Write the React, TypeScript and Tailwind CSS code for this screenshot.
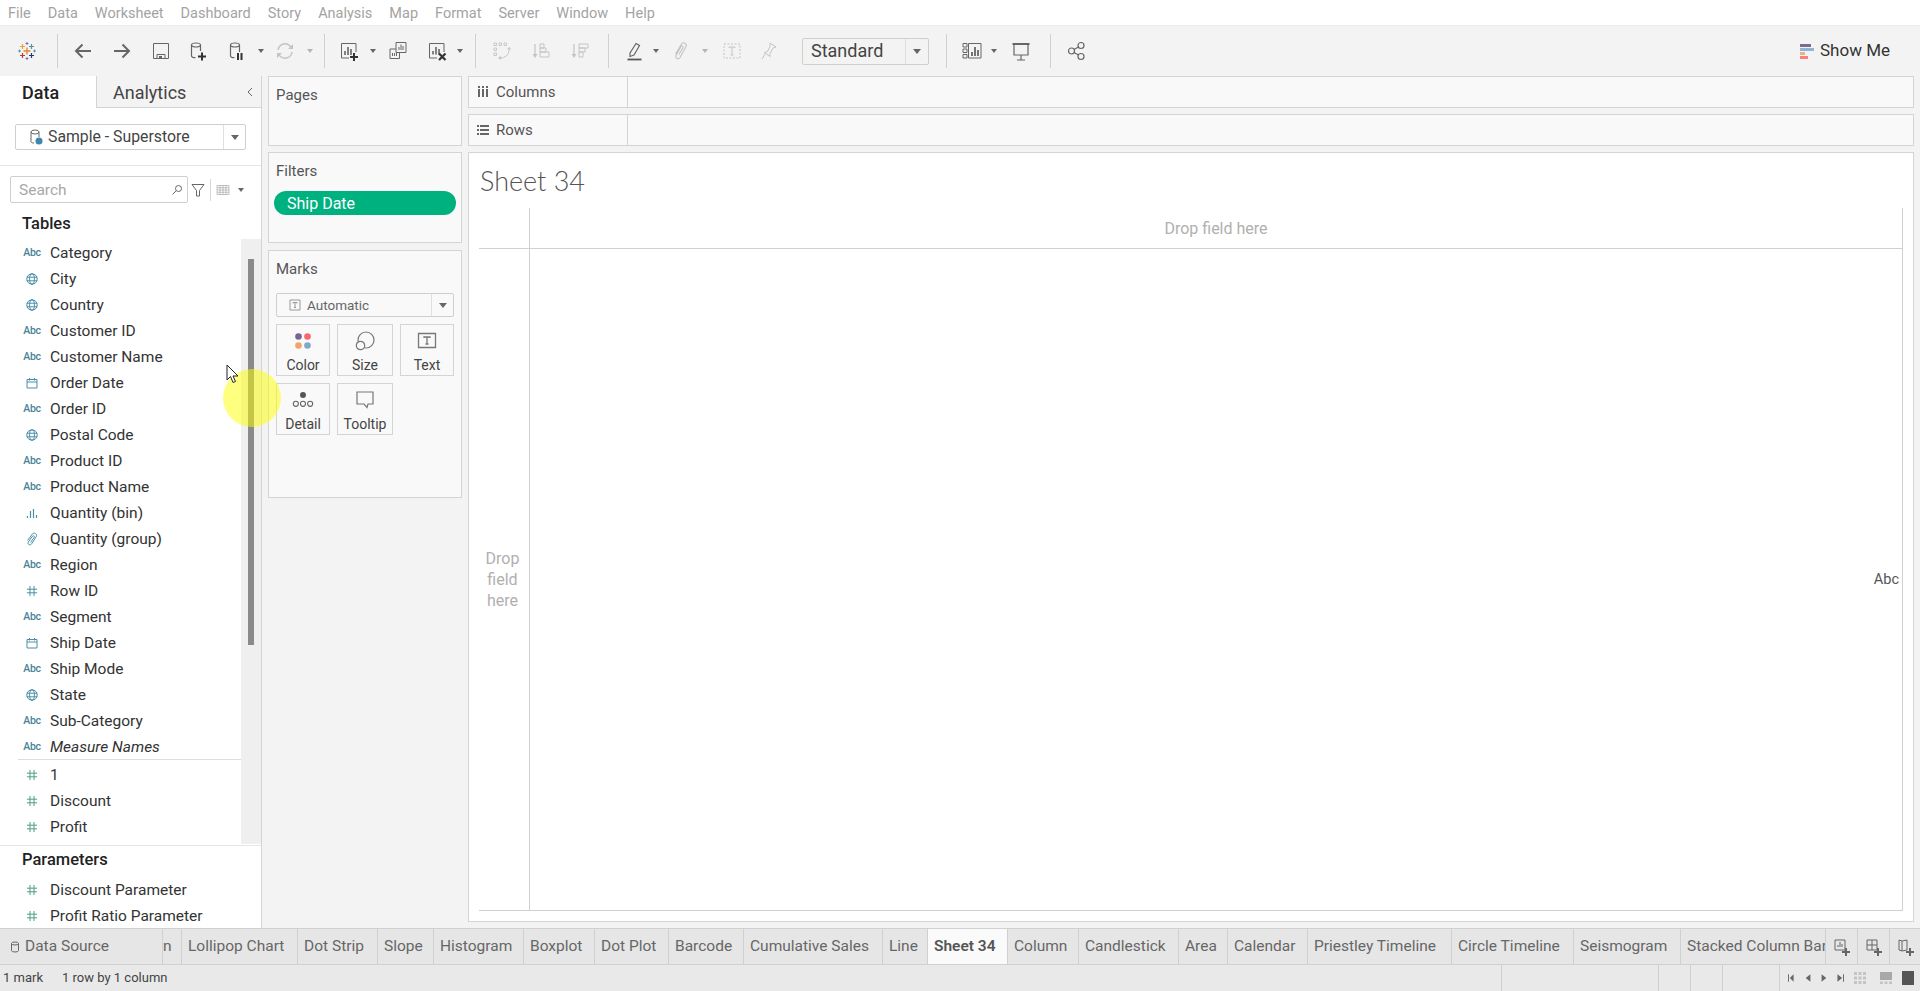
import type { ReactNode } from 'react';

const menuItems = ['File', 'Data', 'Worksheet', 'Dashboard', 'Story', 'Analysis', 'Map', 'Format', 'Server', 'Window', 'Help'];

function Ico({ children, className = '' }: { children: ReactNode; className?: string }) {
  return (
    <svg viewBox="0 0 20 20" className={`w-[20px] h-[20px] shrink-0 ${className}`} fill="none" stroke="currentColor" strokeWidth="1.2">
      {children}
    </svg>
  );
}

// small toolbar caret, keeps an 8px box so the spacing below stays simple
function Caret({ className = '', dim = false }: { className?: string; dim?: boolean }) {
  return (
    <div className={`w-[8px] flex justify-center shrink-0 ${className}`}>
      <svg viewBox="0 0 6 4" className={`w-[6px] h-[4px] ${dim ? 'text-[#b5b5b5]' : 'text-[#666666]'}`}>
        <path d="M0 0h6L3 4z" fill="currentColor" />
      </svg>
    </div>
  );
}

function DropCaret() {
  return (
    <svg viewBox="0 0 8 5" className="w-[8px] h-[5px] text-[#666666]">
      <path d="M0 0h8L4 5z" fill="currentColor" />
    </svg>
  );
}

function Sep({ className = '' }: { className?: string }) {
  return <div className={`w-px h-[34px] bg-[#d0d0d0] shrink-0 ${className}`} />;
}

function TableauLogo() {
  const cross = (x: number, y: number, s: number, c: string, w = 1.2) => (
    <path key={`${x}-${y}`} d={`M${x - s} ${y}H${x + s}M${x} ${y - s}V${y + s}`} stroke={c} strokeWidth={w} />
  );
  return (
    <svg viewBox="0 0 18 18" className="w-[18px] h-[18px] shrink-0 ml-[18px]" fill="none">
      {cross(9, 9, 3.5, '#e8862e', 1.4)}
      {cross(4.5, 4.5, 2.5, '#e8a33c')}
      {cross(13.5, 4.5, 2.5, '#5b8fa8')}
      {cross(4.5, 13.5, 2.5, '#c0392b')}
      {cross(13.5, 13.5, 2.5, '#1f3a73')}
      {cross(9, 1.5, 1.4, '#7a6aa8', 1)}
      {cross(9, 16.5, 1.4, '#7a6aa8', 1)}
      {cross(1.5, 9, 1.4, '#5b8fa8', 1)}
      {cross(16.5, 9, 1.4, '#5b8fa8', 1)}
    </svg>
  );
}

function Toolbar() {
  return (
    <div className="h-[51px] bg-[#f3f3f3] flex items-center text-[#666666] border-t border-[#ececec]">
      <TableauLogo />
      <Sep className="ml-[21px]" />
      <Ico className="ml-[15px]"><path d="M18 10H3M9.500 3.500L3 10l6.500 6.500" strokeWidth="2" /></Ico>
      <Ico className="ml-[19px]"><path d="M2 10h15M10.500 3.500L17 10l-6.500 6.500" strokeWidth="2" /></Ico>
      <Ico className="ml-[19px]"><path d="M2.500 2.500h15v15h-15zM6 17.500v-4h8v4" strokeWidth="1" /><path d="M8 15h3v2.500H8z" fill="currentColor" stroke="none" /></Ico>
      <Ico className="ml-[17px]">
        <ellipse cx="8" cy="4" rx="4.500" ry="2" />
        <path d="M3.500 4v11a3 2 0 0 0 4 1.500M12.500 4v6" />
        <path d="M10 15.500h8M14 11.500v8" strokeWidth="2" stroke="#333333" />
      </Ico>
      <Ico className="ml-[19px]">
        <ellipse cx="8" cy="4" rx="4.500" ry="2" />
        <path d="M3.500 4v11a3 2 0 0 0 4 1.500M12.500 4v7" />
        <path d="M11 12v7M14.500 12v7" strokeWidth="2" stroke="#333333" />
      </Ico>
      <Caret className="ml-[10px]" />
      <Ico className="ml-[10px] text-[#c4c4c4]">
        <path d="M3 9a7 7 0 0 1 12-4l2 2M17 11a7 7 0 0 1-12 4l-2-2" strokeWidth="1.500" />
        <path d="M18 3v5h-5zM2 17v-5h5z" fill="currentColor" stroke="none" />
      </Ico>
      <Caret dim className="ml-[11px]" />
      <Sep className="ml-[10px]" />
      <Ico className="ml-[14px]">
        <path d="M17 11V2.500H2.500V17H10" strokeWidth="1" />
        <path d="M6 14v-4M9 14V6M12 14V8" strokeWidth="1.600" />
        <path d="M11 16h8M15 12v8" strokeWidth="2" stroke="#333333" />
      </Ico>
      <Caret className="ml-[10px]" />
      <Ico className="ml-[11px]">
        <path d="M8 1.500h10v10H8zM2 8h6M2 8v9.500h9.500v-6" strokeWidth="1" />
        <path d="M11 9V6M13 9V3.500M15 9V5M4.500 15v-3M6.500 15v-3M8.500 15v-3" strokeWidth="1" />
      </Ico>
      <Ico className="ml-[19px]">
        <path d="M2.500 2.500H17V11M2.500 2.500V17H10" strokeWidth="1" />
        <path d="M6 13.500V10M9 13.500V6M12 13.500V8" strokeWidth="1.600" />
        <path d="M12 12.500l6.500 6.500M18.500 12.500L12 19" strokeWidth="2.200" stroke="#333333" />
      </Ico>
      <Caret className="ml-[9px]" />
      <Sep className="ml-[11px]" />
      <Ico className="ml-[16px] text-[#c4c4c4]">
        <path d="M2 2h2.500v2.500H2zM7 2h2.500v2.500H7zM12 2h2.500v2.500H12zM2 7h2.500v2.500H2zM2 12h2.500v2.500H2zM8 17a8 8 0 0 0 9-8" strokeWidth="0.900" />
        <path d="M15 8l2.500-2 1.500 3zM9 15v4l-3-2z" fill="currentColor" stroke="none" />
      </Ico>
      <Ico className="ml-[19px] text-[#c4c4c4]">
        <path d="M4 3v12" /><path d="M1.500 13h5L4 17z" fill="currentColor" stroke="none" />
        <path d="M9 3h4v4H9zM9 7h6v4H9zM9 11h9v5H9z" strokeWidth="1" />
      </Ico>
      <Ico className="ml-[19px] text-[#c4c4c4]">
        <path d="M4 3v12" /><path d="M1.500 13h5L4 17z" fill="currentColor" stroke="none" />
        <path d="M9 3h9v4H9zM9 7h6v4H9zM9 11h4v5H9z" strokeWidth="1" />
      </Ico>
      <Sep className="ml-[18px]" />
      <Ico className="ml-[16px]">
        <path d="M5 12L11 2.500l3.500 2L9 14l-4 1.500z" />
        <path d="M2.500 18.500h14" strokeWidth="1.800" stroke="#555555" />
      </Ico>
      <Caret className="ml-[7px]" />
      <Ico className="ml-[11px] text-[#c4c4c4]">
        <path d="M4.500 13L10.500 3c1.800-2.500 6-.5 4.500 2.500L9 16.500c-1.300 2.200-5 1-4-2L10 5.500c.8-1.300 2.500-.5 2 1L8 13.500" strokeWidth="1.100" />
      </Ico>
      <Caret dim className="ml-[10px]" />
      <Ico className="ml-[13px] text-[#c4c4c4]">
        <path d="M2 3h16v14H2z" strokeDasharray="2 1.500" strokeWidth="1" />
        <path d="M7 7V6h6v1M10 6v8M8.500 14h3" strokeWidth="1" />
      </Ico>
      <Ico className="ml-[17px] text-[#c4c4c4]">
        <path d="M11 2l6 4-3 1-3 5.500 0 3-5.500-4 3-1L11 5.500zM6.500 12L3 18" strokeWidth="1" />
      </Ico>
      <div className="ml-[23px] w-[127px] h-[27px] flex items-center border border-[#cfcfcf] rounded-[2px] shrink-0">
        <span className="pl-[8px] flex-1 text-[#444444] text-[18px] leading-[22px] pb-[1px]">Standard</span>
        <div className="w-[23px] h-full flex items-center justify-center border-l border-[#e0e0e0]"><DropCaret /></div>
      </div>
      <Sep className="ml-[17px]" />
      <Ico className="ml-[15px]">
        <path d="M1 2.500h4v3.500H1zM1 8h4v3.500H1zM1 13.500h4V17H1zM6.500 2.500H19V17H6.500z" strokeWidth="1" />
        <path d="M10 15V11M13 15V6M16 15V9" strokeWidth="1.800" />
      </Ico>
      <Caret className="ml-[8px]" />
      <Ico className="ml-[13px]">
        <path d="M1.500 3h17" strokeWidth="2" />
        <path d="M3 3v11h14V3M10 14v5M6 19h8" />
      </Ico>
      <Sep className="ml-[19px]" />
      <Ico className="ml-[16px]">
        <circle cx="14" cy="4.500" r="3" /><circle cx="4.500" cy="10" r="3" /><circle cx="14" cy="15.500" r="3" />
        <path d="M7 8.500l4.500-2.500M7 11.500l4.500 2.500" />
      </Ico>
      <div className="ml-auto mr-[30px] flex items-center gap-[6px]">
        <div className="flex flex-col w-[14px] gap-[1px]">
          <div className="h-[3px] w-[11px] bg-[#7b6b93]" />
          <div className="h-[3px] w-[14px] bg-[#8fb4d6]" />
          <div className="h-[3px] w-[5px] bg-[#f2b27a]" />
          <div className="h-[3px] w-[8px] bg-[#f58283]" />
        </div>
        <span className="text-[17px] text-[#333333]">Show Me</span>
      </div>
    </div>
  );
}

type FieldKind = 'abc' | 'globe' | 'date' | 'bin' | 'clip' | 'hash';

function AbcIcon() {
  return <span className="text-[10.500px] font-medium text-[#4a8299] w-[20px] text-center tracking-[-0.2px]">Abc</span>;
}

function FieldIcon({ kind, color = 'text-[#4a8fa8]' }: { kind: FieldKind; color?: string }) {
  if (kind === 'abc') return <AbcIcon />;
  return (
    <svg viewBox="0 0 14 14" className={`w-[14px] h-[14px] mx-[3px] ${color}`} fill="none" stroke="currentColor" strokeWidth="1">
      {kind === 'globe' && (
        <>
          <circle cx="7" cy="7" r="5.200" />
          <ellipse cx="7" cy="7" rx="2.400" ry="5.200" />
          <path d="M1.800 5.200h10.400M1.800 8.800h10.400" />
        </>
      )}
      {kind === 'date' && <path d="M2 3.500h10v8.500H2zM2 6h10M4.500 2v2.500M9.500 2v2.500" />}
      {kind === 'bin' && <path d="M2.500 12V10M5.500 12V5M8.500 12V3M11.500 12V9" strokeWidth="1.200" />}
      {kind === 'clip' && <path d="M2.500 8.500L7.500 1.800c1.800-1.800 5 .2 3.800 2.700L6.500 12c-1.200 1.800-4.300.6-3.300-1.800L7.500 4.200c.8-1 2.300-.2 1.800 1L5.500 10.500" strokeWidth="1" />}
      {kind === 'hash' && <path d="M5 2v10M9 2v10M2 5.200h10M2 8.800h10" />}
    </svg>
  );
}

const dims: [string, FieldKind][] = [
  ['Category', 'abc'],
  ['City', 'globe'],
  ['Country', 'globe'],
  ['Customer ID', 'abc'],
  ['Customer Name', 'abc'],
  ['Order Date', 'date'],
  ['Order ID', 'abc'],
  ['Postal Code', 'globe'],
  ['Product ID', 'abc'],
  ['Product Name', 'abc'],
  ['Quantity (bin)', 'bin'],
  ['Quantity (group)', 'clip'],
  ['Region', 'abc'],
  ['Row ID', 'hash'],
  ['Segment', 'abc'],
  ['Ship Date', 'date'],
  ['Ship Mode', 'abc'],
  ['State', 'globe'],
  ['Sub-Category', 'abc'],
];

function Field({ label, kind, italic, green }: { label: string; kind: FieldKind; italic?: boolean; green?: boolean }) {
  return (
    <div className="h-[26px] flex items-center pl-[22px] shrink-0">
      <FieldIcon kind={kind} color={green ? 'text-[#4f9e82]' : undefined} />
      <span className={`ml-[8px] pt-[1px] text-[15.500px] text-[#333333] ${italic ? 'italic' : ''}`}>{label}</span>
    </div>
  );
}

function DataPane() {
  return (
    <div className="w-[262px] shrink-0 bg-white border-r border-[#d4d4d4] flex flex-col overflow-hidden">
      <div className="h-[32px] flex shrink-0">
        <div className="w-[97px] flex items-center pl-[22px] pt-[1px] font-medium text-[18px] text-[#222222] border-r border-[#d4d4d4]">Data</div>
        <div className="flex-1 flex items-center justify-between pl-[16px] pr-[8px] pt-[1px] bg-[#f3f3f3] border-b border-[#d4d4d4] text-[18px] text-[#444444]">
          Analytics
          <svg viewBox="0 0 6 10" className="w-[6px] h-[10px] text-[#666666]" fill="none" stroke="currentColor"><path d="M5 1L1 5l4 4" /></svg>
        </div>
      </div>
      <div className="h-[58px] shrink-0 border-b border-[#e6e6e6] pt-[16px] pl-[15px]">
        <div className="w-[231px] h-[26px] flex items-center border border-[#cfcfcf] rounded-[2px]">
          <svg viewBox="0 0 14 16" className="w-[14px] h-[16px] ml-[13px] text-[#666666]" fill="none" stroke="currentColor">
            <ellipse cx="6" cy="3" rx="4" ry="2" />
            <path d="M2 3v9a3 1.500 0 0 0 3 2M10 3v5" />
            <circle cx="10" cy="12" r="3.500" fill="#3f86ad" stroke="none" />
          </svg>
          <span className="ml-[5px] flex-1 text-[15.800px] text-[#444444]">Sample - Superstore</span>
          <div className="w-[22px] h-full flex items-center justify-center border-l border-[#e0e0e0]"><DropCaret /></div>
        </div>
      </div>
      <div className="h-[27px] mt-[10px] flex items-center pl-[10px] shrink-0">
        <div className="w-[178px] h-full flex items-center justify-between border border-[#cfcfcf] rounded-[2px] pl-[8px] pr-[4px]">
          <span className="text-[15.500px] text-[#a8a8a8] pt-[2px]">Search</span>
          <svg viewBox="0 0 12 12" className="w-[12px] h-[12px] text-[#666666]" fill="none" stroke="currentColor"><circle cx="7.500" cy="4.500" r="3" /><path d="M5 7l-3.500 3.500" /></svg>
        </div>
        <svg viewBox="0 0 14 14" className="w-[14px] h-[14px] ml-[3px] text-[#666666]" fill="none" stroke="currentColor"><path d="M1 1.500h12L8.500 7.500v5.500h-3V7.500z" /></svg>
        <div className="w-px h-[22px] bg-[#d8d8d8] ml-[5px]" />
        <svg viewBox="0 0 14 10" className="w-[14px] h-[10px] ml-[5px] text-[#888888]" fill="none" stroke="currentColor" strokeWidth="0.500"><path d="M1 .5h12v9H1zM1 2.750h12M1 5h12M1 7.250h12M4 .5v9M7 .5v9M10 .5v9" /></svg>
        <Caret className="ml-[7px]" />
      </div>
      <div className="h-[24px] mt-[9px] ml-[22px] font-medium text-[16.500px] text-[#222222] leading-[24px] shrink-0">Tables</div>
      <div className="h-[604px] mt-[4px] flex shrink-0">
        <div className="w-[241px] flex flex-col overflow-hidden">
          {dims.map(([label, kind]) => (
            <Field key={label} label={label} kind={kind} />
          ))}
          <Field label="Measure Names" kind="abc" italic />
          <div className="h-px bg-[#dddddd] ml-[18px] shrink-0 mt-[-1px]" />
          <div className="h-[2px] shrink-0" />
          <Field label="1" kind="hash" green />
          <Field label="Discount" kind="hash" green />
          <Field label="Profit" kind="hash" green />
        </div>
        <div className="w-[20px] bg-[#efefef] pl-[7px] pt-[20px] -mt-[1px]">
          <div className="w-[6px] h-[386px] bg-[#8a8a8a]" />
        </div>
      </div>
      <div className="border-t border-[#e6e6e6] mt-[1px] shrink-0">
        <div className="h-[31px] ml-[22px] pb-[2px] flex items-center font-medium text-[16.500px] text-[#222222]">Parameters</div>
        <Field label="Discount Parameter" kind="hash" green />
        <Field label="Profit Ratio Parameter" kind="hash" green />
      </div>
    </div>
  );
}

function MarkButton({ label, children, className }: { label: string; children: ReactNode; className: string }) {
  return (
    <div className={`h-[52px] border border-[#d4d4d4] flex flex-col items-center pt-[3px] ${className}`}>
      <div className="h-[26px] mb-[2px] flex items-center justify-center">{children}</div>
      <span className="text-[14px] leading-[18px] text-[#444444]">{label}</span>
    </div>
  );
}

function MarksCard() {
  return (
    <div className="h-[248px] bg-[#f9f9f9] border border-[#d4d4d4] pl-[7px] shrink-0">
      <div className="h-[37px] flex items-center text-[15px] text-[#555555]">Marks</div>
      <div className="mt-[5px] w-[178px] h-[24px] flex items-center border border-[#cfcfcf] rounded-[2px]">
        <svg viewBox="0 0 12 12" className="w-[12px] h-[12px] ml-[12px] text-[#999999]" fill="none" stroke="currentColor"><path d="M1 1h10v10H1zM4 4.500V3.500h4v1M6 3.500v5M5 8.500h2" /></svg>
        <span className="ml-[6px] flex-1 text-[13.500px] text-[#666666]">Automatic</span>
        <div className="w-[22px] h-full flex items-center justify-center border-l border-[#e0e0e0]"><DropCaret /></div>
      </div>
      <div className="mt-[7px] flex w-[178px]">
        <MarkButton label="Color" className="w-[54px]">
          <svg viewBox="0 0 18 18" className="w-[18px] h-[18px]">
            <circle cx="4.500" cy="4.500" r="3.300" fill="#7b6391" /><circle cx="13.500" cy="4.500" r="3.300" fill="#f5686c" />
            <circle cx="4.500" cy="13.500" r="3.300" fill="#f0a56b" /><circle cx="13.500" cy="13.500" r="3.300" fill="#7fa8d0" />
          </svg>
        </MarkButton>
        <MarkButton label="Size" className="w-[56px] ml-[7px]">
          <svg viewBox="0 0 20 20" className="w-[20px] h-[20px] text-[#777777]" fill="none" stroke="currentColor" strokeWidth="1.200"><circle cx="11" cy="9" r="8" /><circle cx="5.500" cy="14.500" r="4.200" fill="#f9f9f9" /></svg>
        </MarkButton>
        <MarkButton label="Text" className="w-[54px] ml-[7px]">
          <svg viewBox="0 0 20 20" className="w-[20px] h-[20px] text-[#777777]" fill="none" stroke="currentColor" strokeWidth="1.300"><path d="M1.500 2.500h17v14h-17zM7 7V6h6v1M10 6v7M8.500 13h3" /></svg>
        </MarkButton>
      </div>
      <div className="mt-[7px] flex w-[178px]">
        <MarkButton label="Detail" className="w-[54px]">
          <svg viewBox="0 0 20 16" className="w-[22px] h-[18px] text-[#666666]" fill="none" stroke="currentColor">
            <circle cx="10" cy="3.500" r="2.700" fill="#555555" stroke="none" />
            <circle cx="3.500" cy="11.500" r="2.300" /><circle cx="10" cy="11.500" r="2.300" /><circle cx="16.500" cy="11.500" r="2.300" />
          </svg>
        </MarkButton>
        <MarkButton label="Tooltip" className="w-[56px] ml-[7px]">
          <svg viewBox="0 0 20 20" className="w-[20px] h-[20px] text-[#777777]" fill="none" stroke="currentColor" strokeWidth="1.200"><path d="M2 2h16v12h-5l-1 3.500L9 14H2z" /></svg>
        </MarkButton>
      </div>
    </div>
  );
}

function Shelf({ label, children }: { label: string; children: ReactNode }) {
  return (
    <div className="h-[32px] bg-[#f9f9f9] border border-[#d4d4d4] flex shrink-0">
      <div className="w-[159px] border-r border-[#d4d4d4] flex items-center pl-[8px] gap-[7px] text-[15px] text-[#555555]">
        {children}
        {label}
      </div>
    </div>
  );
}

const tabs = [
  ['Lollipop Chart', 'w-[116px]'],
  ['Dot Strip', 'w-[80px]'],
  ['Slope', 'w-[56px]'],
  ['Histogram', 'w-[90px]'],
  ['Boxplot', 'w-[71px]'],
  ['Dot Plot', 'w-[74px]'],
  ['Barcode', 'w-[75px]'],
  ['Cumulative Sales', 'w-[139px]'],
  ['Line', 'w-[45px]'],
  ['Sheet 34', 'w-[80px]'],
  ['Column', 'w-[71px]'],
  ['Candlestick', 'w-[100px]'],
  ['Area', 'w-[49px]'],
  ['Calendar', 'w-[80px]'],
  ['Priestley Timeline', 'w-[144px]'],
  ['Circle Timeline', 'w-[122px]'],
  ['Seismogram', 'w-[107px]'],
];

function TabBar() {
  return (
    <div className="h-[37px] shrink-0 bg-[#e6e6e6] border-y border-[#d0d0d0] flex text-[15.500px] text-[#666666]">
      <div className="w-[163px] shrink-0 flex items-center pl-[10px] gap-[5px] border-r border-[#d0d0d0]">
        <svg viewBox="0 0 10 12" className="w-[10px] h-[12px]" fill="none" stroke="currentColor"><ellipse cx="5" cy="2.500" rx="3.500" ry="1.500" /><path d="M1.500 2.500v7a3.500 1.500 0 0 0 7 0v-7" /></svg>
        Data Source
      </div>
      <div className="w-[19px] shrink-0 border-r border-[#d0d0d0] flex items-center overflow-hidden">n</div>
      {tabs.map(([label, w]) => (
        <div
          key={label}
          className={`${w} shrink-0 flex items-center pl-[6px] whitespace-nowrap border-r border-[#d0d0d0] ${label === 'Sheet 34' ? 'bg-[#fafafa] font-semibold text-[#555555]' : ''}`}
        >
          {label}
        </div>
      ))}
      <div className="w-[144px] shrink-0 flex items-center pl-[6px] whitespace-nowrap overflow-hidden">Stacked Column Bar Chart</div>
      <div className="w-[32px] shrink-0 flex items-center justify-center border-l border-[#d0d0d0]">
        <svg viewBox="0 0 18 18" className="w-[18px] h-[18px]" fill="none" stroke="#666666"><path d="M2 2h10v10H2zM5 9V7M7 9V4M9 9V6" /><path d="M9 14h8M13 10v8" strokeWidth="2" /></svg>
      </div>
      <div className="w-[32px] shrink-0 flex items-center justify-center border-l border-[#d0d0d0]">
        <svg viewBox="0 0 18 18" className="w-[18px] h-[18px]" fill="none" stroke="#666666"><path d="M2 2h10v10H2zM2 7h10M7 2v10" /><path d="M9 14h8M13 10v8" strokeWidth="2" /></svg>
      </div>
      <div className="w-[32px] shrink-0 flex items-center justify-center border-l border-[#d0d0d0]">
        <svg viewBox="0 0 18 18" className="w-[18px] h-[18px]" fill="none" stroke="#666666"><path d="M2 2l3 1 5-1v10l-5 1-3-1zM5 3v10" /><path d="M9 14h8M13 10v8" strokeWidth="2" /></svg>
      </div>
    </div>
  );
}

function StatusBar() {
  return (
    <div className="h-[26px] shrink-0 bg-[#e9e9e9] flex items-center text-[13px] text-[#444444]">
      <span className="ml-[3px] w-[59px]">1 mark</span>
      <span className="w-[1439px]">1 row by 1 column</span>
      <div className="w-[157px] h-full border-l border-[#d0d0d0]" />
      <div className="w-[32px] h-full border-l border-[#d0d0d0]" />
      <div className="w-[32px] h-full border-l border-[#d0d0d0]" />
      <div className="w-[57px] h-full border-l border-[#d0d0d0]" />
      <div className="h-full border-l border-[#d0d0d0] flex items-center pl-[8px] flex-1 text-[#666666]">
        <svg viewBox="0 0 60 8" className="w-[56px] h-[8px]" fill="currentColor">
          <path d="M0 0h1v8H0zM6 0v8L2 4zM24 0v8l-5-4zM36 0l5 4-5 4zM53 0l5 4-5 4zM59 0h1v8h-1z" />
        </svg>
        <svg viewBox="0 0 60 14" className="w-[60px] h-[14px] ml-[10px]">
          <path d="M0 1h3v3H0zM4.500 1h3v3h-3zM9 1h3v3H9zM0 5.500h3v3H0zM4.500 5.500h3v3h-3zM9 5.500h3v3H9zM0 10h3v3H0zM4.500 10h3v3h-3zM9 10h3v3H9z" fill="#c4c4c4" />
          <path d="M26 1h12v8H26z" fill="#a8a8a8" />
          <path d="M26 10.500h3v2.500h-3zM30.500 10.500h3v2.500h-3zM35 10.500h3v2.500h-3z" fill="#c4c4c4" />
          <path d="M48 0h12v14H48z" fill="#555555" />
        </svg>
      </div>
    </div>
  );
}

function Canvas() {
  return (
    <div className="flex-1 bg-white border border-[#d4d4d4] flex flex-col min-h-0">
      <div className="h-[55px] pl-[11px] pt-[10px] text-[27px] leading-[36px] font-light text-[#555555] shrink-0" style={{ fontFamily: 'Lato, sans-serif' }}>Sheet 34</div>
      <div className="flex-1 ml-[10px] mr-[10px] mb-[10px] border-r border-b border-[#d0d0d0] grid grid-cols-[51px_1fr] grid-rows-[41px_1fr] text-[16px] text-[#b0b0b0]">
        <div className="border-r border-b border-[#d0d0d0]" />
        <div className="border-b border-[#d0d0d0] pt-[2px] flex items-center justify-center">Drop field here</div>
        <div className="border-r border-[#d0d0d0] flex items-center justify-center text-center leading-[21px] pr-[3px]">Drop<br />field<br />here</div>
        <div className="flex items-center justify-end pr-[3px] pt-[1px] text-[#555555] text-[14.500px]">Abc</div>
      </div>
    </div>
  );
}

export default function App() {
  return (
    <div className="relative w-[1920px] h-[991px] flex flex-col overflow-hidden bg-[#f3f3f3]" style={{ fontFamily: 'Roboto, sans-serif' }}>
      <div className="h-[25px] bg-white flex items-center gap-[17px] pl-[8px] pt-[3px] text-[14.500px] text-[#a3a3a3] shrink-0">
        {menuItems.map((label) => (
          <span key={label}>{label}</span>
        ))}
      </div>
      <Toolbar />
      <div className="flex flex-1 min-h-0">
        <DataPane />
        <div className="w-[194px] ml-[6px] shrink-0 flex flex-col">
          <div className="h-[70px] bg-[#f9f9f9] border border-[#d4d4d4] pl-[7px] pt-[7px] text-[15px] text-[#555555] shrink-0">Pages</div>
          <div className="h-[91px] mt-[6px] bg-[#f9f9f9] border border-[#d4d4d4] px-[5px] shrink-0">
            <div className="h-[37px] pl-[2px] flex items-center text-[15px] text-[#555555]">Filters</div>
            <div className="h-[24px] mt-[1px] pt-[1px] rounded-full bg-[#00b180] text-white text-[16px] flex items-center pl-[13px]">Ship Date</div>
          </div>
          <div className="mt-[7px]"><MarksCard /></div>
        </div>
        <div className="flex-1 ml-[6px] mr-[6px] mb-[6px] flex flex-col gap-[6px] min-w-0">
          <Shelf label="Columns">
            <svg viewBox="0 0 12 12" className="w-[12px] h-[12px] text-[#666666]" fill="currentColor"><path d="M1 3h2v8H1zM5 3h2v8H5zM9 3h2v8H9zM1 0h2v2H1zM5 0h2v2H5zM9 0h2v2H9z" /></svg>
          </Shelf>
          <Shelf label="Rows">
            <svg viewBox="0 0 12 12" className="w-[12px] h-[12px] text-[#666666]" fill="currentColor"><path d="M0 1h2v2H0zM3 1h9v2H3zM0 5h2v2H0zM3 5h9v2H3zM0 9h2v2H0zM3 9h9v2H3z" /></svg>
          </Shelf>
          <Canvas />
        </div>
      </div>
      <TabBar />
      <StatusBar />

      {/* recording cursor highlight, sits over the panes */}
      <div className="absolute left-[223px] top-[369px] w-[58px] h-[58px] rounded-full bg-[#ffff00]/50" />
      <svg viewBox="0 0 13 20" className="absolute left-[226px] top-[364px] w-[13px] h-[20px]">
        <path d="M1 1v15l3.500-3.500 2.500 6 2.500-1-2.500-5.500H12z" fill="#ffffff" stroke="#222222" strokeWidth="1" />
      </svg>
    </div>
  );
}
